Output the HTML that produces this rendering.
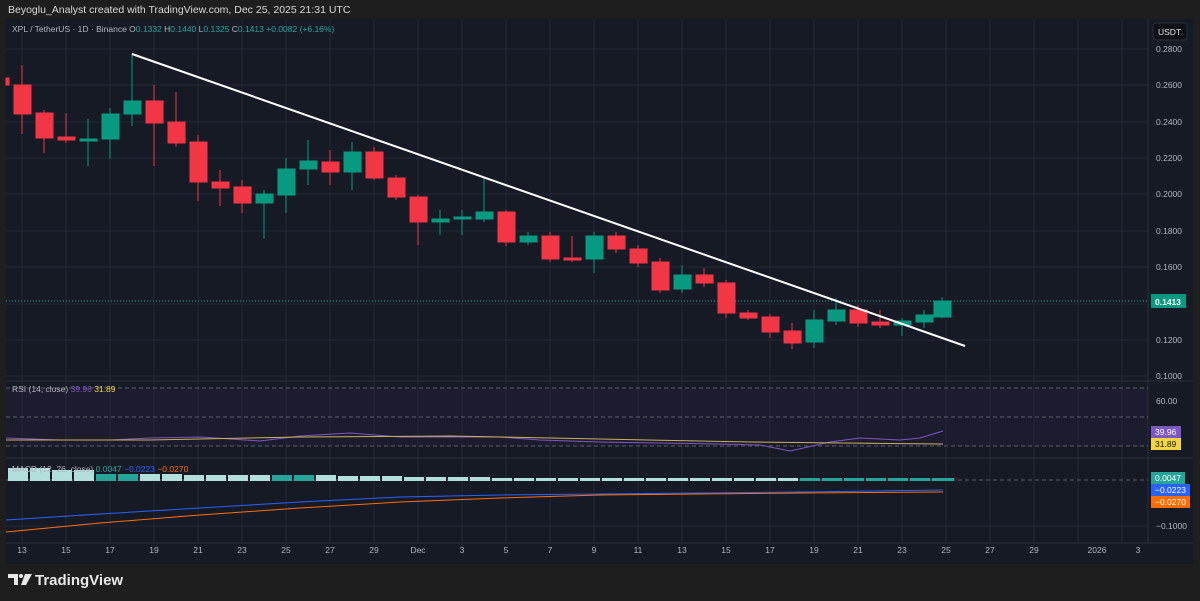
<!DOCTYPE html>
<html><head><meta charset="utf-8"><style>
html,body{margin:0;padding:0;background:#1e1e1e;width:1200px;height:601px;overflow:hidden;font-family:"Liberation Sans",sans-serif}
svg{position:absolute;left:0;top:0}
</style></head><body>
<svg width="1200" height="601" viewBox="0 0 1200 601" xmlns="http://www.w3.org/2000/svg" font-family="Liberation Sans, sans-serif">
<rect x="0" y="0" width="1200" height="601" fill="#1e1e1e"/>
<text x="8" y="13" font-size="10.5" fill="#d8d8d8">Beyoglu_Analyst created with TradingView.com, Dec 25, 2025 21:31 UTC</text>
<rect x="6" y="19" width="1187" height="545" fill="#161a25"/>
<rect x="6" y="388" width="1142" height="58" fill="#1d1b2e"/>
<g stroke="#232734" stroke-width="1">
<line x1="6" y1="49" x2="1148" y2="49"/><line x1="6" y1="85" x2="1148" y2="85"/><line x1="6" y1="122" x2="1148" y2="122"/><line x1="6" y1="158" x2="1148" y2="158"/><line x1="6" y1="194" x2="1148" y2="194"/><line x1="6" y1="231" x2="1148" y2="231"/><line x1="6" y1="267" x2="1148" y2="267"/><line x1="6" y1="304" x2="1148" y2="304"/><line x1="6" y1="340" x2="1148" y2="340"/><line x1="6" y1="376" x2="1148" y2="376"/>
<line x1="6" y1="526" x2="1148" y2="526"/>
</g>
<g stroke="#232734" stroke-width="1">
<line x1="22" y1="19" x2="22" y2="543"/><line x1="66" y1="19" x2="66" y2="543"/><line x1="110" y1="19" x2="110" y2="543"/><line x1="154" y1="19" x2="154" y2="543"/><line x1="198" y1="19" x2="198" y2="543"/><line x1="242" y1="19" x2="242" y2="543"/><line x1="286" y1="19" x2="286" y2="543"/><line x1="330" y1="19" x2="330" y2="543"/><line x1="374" y1="19" x2="374" y2="543"/><line x1="418" y1="19" x2="418" y2="543"/><line x1="462" y1="19" x2="462" y2="543"/><line x1="506" y1="19" x2="506" y2="543"/><line x1="550" y1="19" x2="550" y2="543"/><line x1="594" y1="19" x2="594" y2="543"/><line x1="638" y1="19" x2="638" y2="543"/><line x1="682" y1="19" x2="682" y2="543"/><line x1="726" y1="19" x2="726" y2="543"/><line x1="770" y1="19" x2="770" y2="543"/><line x1="814" y1="19" x2="814" y2="543"/><line x1="858" y1="19" x2="858" y2="543"/><line x1="902" y1="19" x2="902" y2="543"/><line x1="946" y1="19" x2="946" y2="543"/><line x1="990" y1="19" x2="990" y2="543"/><line x1="1034" y1="19" x2="1034" y2="543"/><line x1="1078" y1="19" x2="1078" y2="543"/><line x1="1122" y1="19" x2="1122" y2="543"/>
</g>
<line x1="6" y1="381" x2="1193" y2="381" stroke="#2a2e39"/>
<line x1="6" y1="458" x2="1193" y2="458" stroke="#2a2e39"/>
<line x1="6" y1="543" x2="1193" y2="543" stroke="#2a2e39"/>
<line x1="1148" y1="19" x2="1148" y2="543" stroke="#2a2e39"/>
<g stroke="#5d606b" stroke-dasharray="4,3"><line x1="6" y1="388" x2="1148" y2="388"/><line x1="6" y1="417" x2="1148" y2="417"/><line x1="6" y1="446" x2="1148" y2="446"/></g>
<text x="12" y="392" font-size="8.5" fill="#b2b5be">RSI (14, close) <tspan fill="#7e57c2">39.96</tspan> <tspan fill="#f5d442">31.89</tspan></text>
<polyline fill="none" stroke="#7e57c2" stroke-width="1" points="6,438 60,440 110,440 150,438 200,437 260,441 300,436 350,433 400,437 450,437 500,437 540,440 600,442 660,443 720,444 760,445 790,451 830,442 860,438 900,440 920,438 943,431"/>
<polyline fill="none" stroke="#c9b456" stroke-width="1" points="6,440 150,440 300,437 450,436 600,439 750,442 943,444"/>
<line x1="6" y1="480" x2="1148" y2="480" stroke="#5d606b" stroke-dasharray="4,3"/>
<g fill="#b2dfdb">
<rect x="8" y="468" width="20" height="13"/><rect x="30" y="468" width="20" height="13"/><rect x="52" y="470" width="20" height="11"/><rect x="74" y="470" width="20" height="11"/><rect x="140" y="474" width="20" height="7"/><rect x="162" y="474" width="20" height="7"/><rect x="184" y="475" width="20" height="6"/><rect x="206" y="475" width="20" height="6"/><rect x="228" y="475" width="20" height="6"/><rect x="250" y="475" width="20" height="6"/><rect x="316" y="475" width="20" height="6"/><rect x="338" y="476" width="20" height="5"/><rect x="360" y="476" width="20" height="5"/><rect x="382" y="476" width="20" height="5"/><rect x="404" y="477" width="20" height="4"/><rect x="426" y="477" width="20" height="4"/><rect x="448" y="477" width="20" height="4"/><rect x="470" y="477" width="20" height="4"/><rect x="492" y="478" width="20" height="3"/><rect x="514" y="478" width="20" height="3"/><rect x="536" y="478" width="20" height="3"/><rect x="558" y="478" width="20" height="3"/><rect x="580" y="478" width="20" height="3"/><rect x="602" y="478" width="20" height="3"/><rect x="624" y="478" width="20" height="3"/><rect x="646" y="478" width="20" height="3"/><rect x="668" y="478" width="20" height="3"/><rect x="690" y="478" width="20" height="3"/><rect x="712" y="478" width="20" height="3"/><rect x="734" y="478" width="20" height="3"/><rect x="756" y="478" width="20" height="3"/><rect x="778" y="478" width="20" height="3"/>
</g>
<g fill="#26a69a">
<rect x="96" y="474" width="20" height="7"/><rect x="118" y="474" width="20" height="7"/><rect x="272" y="475" width="20" height="6"/><rect x="294" y="475" width="20" height="6"/><rect x="800" y="478" width="20" height="3"/><rect x="822" y="478" width="20" height="3"/><rect x="844" y="478" width="20" height="3"/><rect x="866" y="478" width="20" height="3"/><rect x="888" y="478" width="20" height="3"/><rect x="910" y="478" width="20" height="3"/><rect x="932" y="478" width="22" height="3"/>
</g>
<text x="12" y="472" font-size="8.5" fill="#b2b5be">MACD (12, 26, close) <tspan fill="#26a69a">0.0047</tspan> <tspan fill="#2962ff">−0.0223</tspan> <tspan fill="#ff6d00">−0.0270</tspan></text>
<polyline fill="none" stroke="#2962ff" stroke-width="1" points="6,520 100,514 200,508 300,502 400,497 500,495 600,494 700,493 800,492 943,490"/>
<polyline fill="none" stroke="#ff6d00" stroke-width="1" points="6,532 100,523 200,515 300,508 400,502 500,498 600,495 700,494 800,493 943,492"/>
<line x1="6" y1="301" x2="1148" y2="301" stroke="#26a69a" stroke-dasharray="1,2"/>
<g stroke-width="1">
<g stroke="#f23645" fill="#f23645">
<rect x="6" y="78" width="3" height="7"/>
<line x1="22" y1="65" x2="22" y2="134"/><rect x="14" y="85" width="17" height="29"/>
<line x1="44" y1="110" x2="44" y2="153"/><rect x="36" y="113" width="17" height="25"/>
<line x1="66" y1="113" x2="66" y2="143"/><rect x="58" y="137" width="17" height="3"/>
<line x1="154" y1="85" x2="154" y2="166"/><rect x="146" y="101" width="17" height="22"/>
<line x1="176" y1="92" x2="176" y2="147"/><rect x="168" y="122" width="17" height="21"/>
<line x1="198" y1="135" x2="198" y2="201"/><rect x="190" y="142" width="17" height="40"/>
<line x1="220" y1="170" x2="220" y2="206"/><rect x="212" y="182" width="17" height="6"/>
<line x1="242" y1="180" x2="242" y2="213"/><rect x="234" y="187" width="17" height="16"/>
<line x1="330" y1="150" x2="330" y2="185"/><rect x="322" y="162" width="17" height="10"/>
<line x1="374" y1="147" x2="374" y2="180"/><rect x="366" y="152" width="17" height="26"/>
<line x1="396" y1="175" x2="396" y2="200"/><rect x="388" y="178" width="17" height="19"/>
<line x1="418" y1="195" x2="418" y2="245"/><rect x="410" y="197" width="17" height="25"/>
<line x1="506" y1="210" x2="506" y2="246"/><rect x="498" y="212" width="17" height="30"/>
<line x1="550" y1="232" x2="550" y2="262"/><rect x="542" y="236" width="17" height="23"/>
<line x1="572" y1="236" x2="572" y2="262"/><rect x="564" y="258" width="17" height="2"/>
<line x1="616" y1="232" x2="616" y2="253"/><rect x="608" y="236" width="17" height="13"/>
<line x1="638" y1="245" x2="638" y2="267"/><rect x="630" y="249" width="17" height="14"/>
<line x1="660" y1="258" x2="660" y2="293"/><rect x="652" y="262" width="17" height="28"/>
<line x1="704" y1="268" x2="704" y2="287"/><rect x="696" y="275" width="17" height="8"/>
<line x1="726" y1="280" x2="726" y2="318"/><rect x="718" y="283" width="17" height="30"/>
<line x1="748" y1="310" x2="748" y2="320"/><rect x="740" y="313" width="17" height="5"/>
<line x1="770" y1="314" x2="770" y2="338"/><rect x="762" y="317" width="17" height="15"/>
<line x1="792" y1="323" x2="792" y2="349"/><rect x="784" y="331" width="17" height="12"/>
<line x1="858" y1="305" x2="858" y2="327"/><rect x="850" y="310" width="17" height="13"/>
<line x1="880" y1="310" x2="880" y2="328"/><rect x="872" y="322" width="17" height="3"/>
</g>
<g stroke="#089981" fill="#089981">
<line x1="88" y1="119" x2="88" y2="166"/><rect x="80" y="139" width="17" height="2"/>
<line x1="110" y1="108" x2="110" y2="159"/><rect x="102" y="114" width="17" height="25"/>
<line x1="132" y1="54" x2="132" y2="126"/><rect x="124" y="101" width="17" height="13"/>
<line x1="264" y1="190" x2="264" y2="239"/><rect x="256" y="194" width="17" height="9"/>
<line x1="286" y1="158" x2="286" y2="213"/><rect x="278" y="169" width="17" height="26"/>
<line x1="308" y1="140" x2="308" y2="185"/><rect x="300" y="161" width="17" height="8"/>
<line x1="352" y1="142" x2="352" y2="190"/><rect x="344" y="152" width="17" height="20"/>
<line x1="440" y1="210" x2="440" y2="235"/><rect x="432" y="219" width="17" height="3"/>
<line x1="462" y1="210" x2="462" y2="235"/><rect x="454" y="217" width="17" height="2"/>
<line x1="484" y1="178" x2="484" y2="222"/><rect x="476" y="212" width="17" height="7"/>
<line x1="528" y1="232" x2="528" y2="245"/><rect x="520" y="236" width="17" height="6"/>
<line x1="594" y1="232" x2="594" y2="273"/><rect x="586" y="236" width="17" height="23"/>
<line x1="682" y1="265" x2="682" y2="293"/><rect x="674" y="275" width="17" height="14"/>
<line x1="814" y1="310" x2="814" y2="348"/><rect x="806" y="320" width="17" height="22"/>
<line x1="836" y1="298" x2="836" y2="325"/><rect x="828" y="310" width="17" height="11"/>
<line x1="902" y1="318" x2="902" y2="336"/><rect x="894" y="321" width="17" height="4"/>
<line x1="924" y1="310" x2="924" y2="328"/><rect x="916" y="315" width="17" height="7"/>
<line x1="942" y1="297" x2="942" y2="318"/><rect x="934" y="301" width="17" height="16"/>
</g>
</g>
<line x1="132" y1="54" x2="965" y2="346" stroke="#ffffff" stroke-width="2"/>
<text x="12" y="32" font-size="8.5" fill="#b2b5be">XPL / TetherUS · 1D · Binance  O<tspan fill="#26a69a">0.1332</tspan>  H<tspan fill="#26a69a">0.1440</tspan>  L<tspan fill="#26a69a">0.1325</tspan>  C<tspan fill="#26a69a">0.1413</tspan>  <tspan fill="#26a69a">+0.0082 (+6.16%)</tspan></text>
<rect x="1153" y="23" width="34" height="17" rx="3" fill="#0f1117" stroke="#2a2e39"/>
<text x="1158" y="35" font-size="8.5" fill="#e0e3eb">USDT</text>
<g font-size="8.5" fill="#b2b5be">
<text x="1156" y="52">0.2800</text><text x="1156" y="88">0.2600</text><text x="1156" y="125">0.2400</text><text x="1156" y="161">0.2200</text><text x="1156" y="197">0.2000</text><text x="1156" y="234">0.1800</text><text x="1156" y="270">0.1600</text><text x="1156" y="343">0.1200</text><text x="1156" y="379">0.1000</text>
<text x="1156" y="404">60.00</text><text x="1156" y="529">−0.1000</text>
</g>
<rect x="1151" y="294" width="35" height="14" fill="#089981"/><text x="1155" y="305" font-size="8.5" fill="#fff" font-weight="bold">0.1413</text>
<rect x="1151" y="426" width="30" height="12" fill="#7e57c2"/><text x="1155" y="435" font-size="8.5" fill="#fff">39.96</text>
<rect x="1151" y="438" width="30" height="12" fill="#f5d442"/><text x="1155" y="447" font-size="8.5" fill="#131722">31.89</text>
<rect x="1151" y="472" width="34" height="12" fill="#26a69a"/><text x="1155" y="481" font-size="8.5" fill="#fff">0.0047</text>
<rect x="1151" y="484" width="39" height="12" fill="#2962ff"/><text x="1155" y="493" font-size="8.5" fill="#fff">−0.0223</text>
<rect x="1151" y="496" width="39" height="12" fill="#ff6d00"/><text x="1155" y="505" font-size="8.5" fill="#fff">−0.0270</text>
<g font-size="8.5" fill="#b2b5be" text-anchor="middle">
<text x="22" y="553">13</text><text x="66" y="553">15</text><text x="110" y="553">17</text><text x="154" y="553">19</text><text x="198" y="553">21</text><text x="242" y="553">23</text><text x="286" y="553">25</text><text x="330" y="553">27</text><text x="374" y="553">29</text><text x="418" y="553">Dec</text><text x="462" y="553">3</text><text x="506" y="553">5</text><text x="550" y="553">7</text><text x="594" y="553">9</text><text x="638" y="553">11</text><text x="682" y="553">13</text><text x="726" y="553">15</text><text x="770" y="553">17</text><text x="814" y="553">19</text><text x="858" y="553">21</text><text x="902" y="553">23</text><text x="946" y="553">25</text><text x="990" y="553">27</text><text x="1034" y="553">29</text><text x="1097" y="553">2026</text><text x="1138" y="553">3</text>
</g>
<g fill="#e8e8e8">
<path d="M8 574 h10 v11 h-4 v-7 h-6 z"/>
<circle cx="21" cy="576" r="2"/>
<path d="M25 574 h7 l-6 11 h-5 z"/>
</g>
<text x="35" y="585" font-size="15" font-weight="bold" fill="#e8e8e8">TradingView</text>
</svg>
</body></html>
